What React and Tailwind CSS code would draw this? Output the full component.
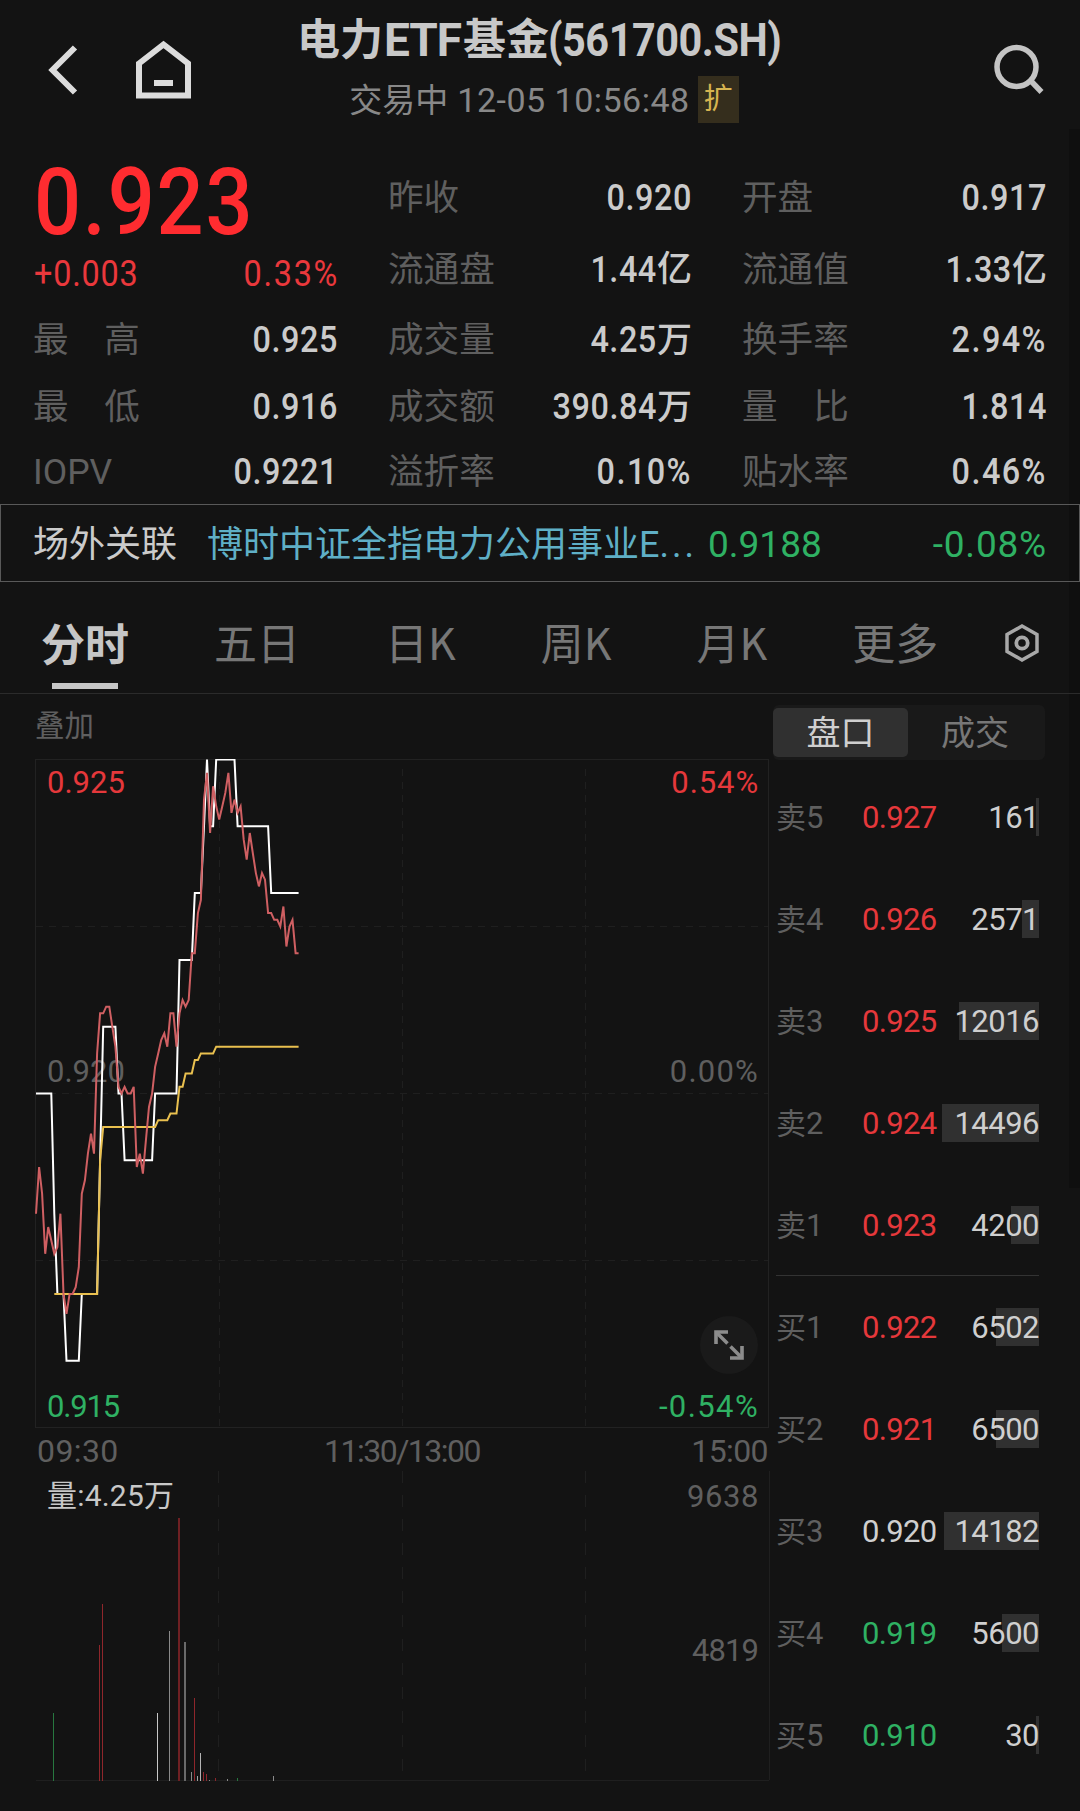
const stats = [
  [
    { label: '昨收', value: '0.920' },
    { label: '流通盘', value: '1.44', unit: '亿' },
    { label: '成交量', value: '4.25', unit: '万' },
    { label: '成交额', value: '390.84', unit: '万' },
    { label: '溢折率', value: '0.10%' }
  ],
  [
    { label: '开盘', value: '0.917' },
    { label: '流通值', value: '1.33', unit: '亿' },
    { label: '换手率', value: '2.94%' },
    { label: '量\u3000比', value: '1.814' },
    { label: '贴水率', value: '0.46%' }
  ]
];

const leftStats = [
  { label: '最\u3000高', value: '0.925' },
  { label: '最\u3000低', value: '0.916' },
  { label: 'IOPV', value: '0.9221' }
];

const tabs = ['五日', '日K', '周K', '月K', '更多'];

const asks = [
  { label: '卖5', price: '0.927', volume: 161 },
  { label: '卖4', price: '0.926', volume: 2571 },
  { label: '卖3', price: '0.925', volume: 12016 },
  { label: '卖2', price: '0.924', volume: 14496 },
  { label: '卖1', price: '0.923', volume: 4200 }
];

const bids = [
  { label: '买1', price: '0.922', volume: 6502 },
  { label: '买2', price: '0.921', volume: 6500 },
  { label: '买3', price: '0.920', volume: 14182 },
  { label: '买4', price: '0.919', volume: 5600 },
  { label: '买5', price: '0.910', volume: 30 }
];

const maxVolume = 14496;
const prevClose = 0.92;

// [minute, offset from previous close in 0.0001]
const priceLine = [
  [0, 0], [5, 0], [6, -18], [7, -30], [9, -30], [10, -40], [14, -40], [15, -30], [20, -30],
  [21, -10], [22, 10], [26, 10], [27, 0], [28, 0], [29, -10], [38, -10], [39, 0], [46, 0],
  [47, 20], [51, 20], [52, 30], [54, 30], [55, 40], [56, 50], [57, 40], [58, 40], [59, 50],
  [65, 50], [66, 40], [76, 40], [77, 30], [86, 30]
];

const avgLine = [
  [6, -30], [20, -30], [21, -10], [22, -5], [39, -5], [40, -4], [43, -4], [44, -3], [46, -3],
  [47, 1], [48, 1], [49, 3], [51, 3], [52, 5], [53, 5], [54, 6], [58, 6], [59, 7], [86, 7]
];

// one entry per minute
const iopv = [
  -18, -11, -15, -24, -20, -22, -24, -23, -18, -30, -33, -30, -30, -29, -26, -15, -13, -9, -6, -9,
  6, 12, 12, 13, 13, 10, 7, 1, 0, 1, 0, 0, 1, -11, -9, -12, -7, -2, 0, 4,
  6, 8, 9, 7, 12, 12, 7, 12, 14, 13, 14, 21, 21, 27, 29, 44, 48, 39, 46, 43,
  41, 43, 45, 48, 42, 44, 42, 43, 38, 35, 39, 36, 33, 31, 33, 32, 27, 27, 26, 26,
  25, 28, 22, 25, 26, 21, 21
].map((v, i) => [i, v]);

const volumeBars = [
  { x: 18, h: 68, color: '#27773f' },
  { x: 64, h: 136, color: '#8f262b' },
  { x: 67, h: 177, color: '#8f262b' },
  { x: 122, h: 68, color: '#c8c8c8' },
  { x: 134, h: 150, color: '#8a8a8a' },
  { x: 143, h: 263, color: '#6f2023', w: 2 },
  { x: 149, h: 139, color: '#6a6a6a', w: 2 },
  { x: 156, h: 9, color: '#8a8a8a' },
  { x: 159, h: 83, color: '#8f262b' },
  { x: 162, h: 5, color: '#a0a0a0' },
  { x: 165, h: 28, color: '#b4b4b4' },
  { x: 168, h: 9, color: '#8f262b' },
  { x: 171, h: 7, color: '#8f262b' },
  { x: 174, h: 1, color: '#8a8a8a' },
  { x: 180, h: 3, color: '#8f262b' },
  { x: 192, h: 2, color: '#8a8a8a' },
  { x: 202, h: 3, color: '#27773f' },
  { x: 238, h: 5, color: '#8a8a8a' }
];

const toPoints = (line) =>
  line.map(([m, v]) => `${(m * 3.054 + 1).toFixed(1)},${(334.5 - v * 6.68).toFixed(1)}`).join(' ');

const priceColor = (price) => {
  if (Number(price) > prevClose) return 'text-[#e5383b]';
  if (Number(price) < prevClose) return 'text-[#2fb163]';
  return 'text-[#cfcfcf]';
};

const StatRow = ({ label, value, unit }) => (
  <div className="flex items-center justify-between pt-px">
    <span className="-ml-px pt-[2px] text-[35.6px] text-[#5f5f5f]">{label}</span>
    <span className="-mr-px flex items-center font-medium text-[#cbcbcb]">
      <span className={`origin-right scale-x-90 ${value.endsWith('%') ? 'tracking-[1.6px]' : 'tracking-[0.6px]'}`}>
        {value}
      </span>
      {unit && <span className="text-[35px]">{unit}</span>}
    </span>
  </div>
);

const Header = () => (
  <header className="flex h-[161px] items-start">
    <div className="flex w-[230px] pl-[44px] pt-[38px]">
      <svg width="38" height="64" viewBox="0 0 38 64" fill="none" stroke="#dcdcdc" strokeWidth="6">
        <path d="M31 9.5 L8.5 32 L31 54.5" />
      </svg>
      <svg className="ml-[50px]" width="64" height="64" viewBox="0 0 64 64" fill="none" stroke="#dcdcdc" strokeWidth="6">
        <path d="M7 25.5 L31.5 6.5 L56 25.5 V57.5 H7 Z" />
        <path d="M22 45 H41" />
      </svg>
    </div>
    <div className="flex flex-1 flex-col items-center pt-[16px]">
      <h1 className="flex h-[48px] items-center whitespace-nowrap text-[43px] font-bold leading-none text-[#c8c8c8]">
        <span>电力</span>
        <span className="ml-px text-[46px] tracking-[-1px]">ETF</span>
        <span className="ml-[2px]">基金</span>
        <span className="-ml-px w-[235px] origin-left scale-x-90 text-[46px] tracking-[-0.5px]">(561700.SH)</span>
      </h1>
      <div className="ml-[8px] mt-[12px] flex h-[47px] items-center whitespace-nowrap text-[34px] leading-none text-[#888888]">
        <span className="pt-[2px] text-[33px]">交易中</span>
        <span className="ml-[9px] pt-px tracking-[0.5px]">12-05 10:56:48</span>
        <span className="ml-[8px] flex h-[47px] w-[41px] justify-center bg-[#352e1d] pt-[9px] text-[29px] text-[#d6b450]">
          扩
        </span>
      </div>
    </div>
    <div className="flex w-[230px] justify-end pr-[34px] pt-[40px]">
      <svg width="56" height="60" viewBox="0 0 56 60" fill="none" stroke="#c4c4c4" strokeWidth="5.5">
        <circle cx="26.5" cy="27" r="19.5" />
        <path d="M40 40 L51.5 52" />
      </svg>
    </div>
  </header>
);

const Quote = () => (
  <section className="grid h-[343px] grid-cols-[303px_302px_303px] gap-x-[52px] pl-[34px] text-[36px] leading-none">
    <div>
      <div className="flex h-[81px] items-center pt-[3px] text-[92px] font-medium text-[#ff2c30]">
        <span className="origin-left scale-x-90 tracking-[2px]">0.923</span>
      </div>
      <div className="flex h-[63px] items-center justify-between text-[#ea383c]">
        <span className="origin-left scale-x-90 tracking-[0.9px]">+0.003</span>
        <span className="-mr-[2px] origin-right scale-x-90 tracking-[1.9px]">0.33%</span>
      </div>
      <div className="grid grid-rows-[69px_65px_65px]">
        {leftStats.map((s) => (
          <StatRow key={s.label} {...s} />
        ))}
      </div>
    </div>
    {stats.map((column, i) => (
      <div key={i} className="grid grid-rows-[72px_72px_69px_65px_65px]">
        {column.map((s) => (
          <StatRow key={s.label} {...s} />
        ))}
      </div>
    ))}
  </section>
);

const LinkedFund = () => (
  <section className="flex h-[78px] items-center whitespace-nowrap border border-[#595959] px-[32px] text-[36px] leading-none">
    <span className="pt-[3px] text-[#cbcbcb]">场外关联</span>
    <span className="ml-[30px] w-[487px] pt-[3px] text-[#5fafc6]">
      博时中证全指电力公用事业E<span className="tracking-[3px]">...</span>
    </span>
    <span className="ml-[14px] pt-[2px] text-[37px] text-[#2fb163]">0.9188</span>
    <span className="ml-auto pt-[2px] text-[37px] tracking-[0.8px] text-[#2fb163]">-0.08%</span>
  </section>
);

const Tabs = () => (
  <nav className="flex h-[112px] items-stretch gap-[85px] whitespace-nowrap border-b border-[#2b2b2b] pl-[41px] font-['Noto_Sans_CJK_SC',sans-serif] text-[43px] leading-none text-[#777777]">
    <button className="flex flex-col items-center pt-[38px] text-[44px] font-bold text-[#c6c6c6]">
      <span>分时</span>
      <span className="mt-[19px] h-[6px] w-[66px] bg-[#c6c6c6]" />
    </button>
    {tabs.map((tab) => (
      <button key={tab} className="flex pt-[38px]">{tab}</button>
    ))}
    <svg className="-ml-[20px] mt-[41px] shrink-0" width="38" height="40" viewBox="0 0 38 40" fill="none" stroke="#a8a8a8" strokeWidth="3.5">
      <path d="M19 3 L34 11.5 V28.5 L19 37 L4 28.5 V11.5 Z" />
      <circle cx="19" cy="20" r="5.7" strokeWidth="3.8" />
    </svg>
  </nav>
);

const PriceChart = () => (
  <div className="relative h-[669px] w-[735px] text-[31px] leading-none">
    <div className="absolute inset-0 flex flex-col justify-between pl-[12px] pr-[11px] pb-[6px] pt-[8px]">
      <div className="flex justify-between text-[#e5383b]">
        <span>0.925</span>
        <span className="tracking-[0.9px]">0.54%</span>
      </div>
      <div className="-mt-[46px] flex justify-between text-[#5f5f5f]">
        <span>0.920</span>
        <span className="tracking-[1.2px]">0.00%</span>
      </div>
      <div className="flex justify-between text-[#2fb163]">
        <span className="tracking-[-1.2px]">0.915</span>
        <span className="tracking-[1.4px]">-0.54%</span>
      </div>
    </div>
    <svg className="relative block" width="735" height="669" viewBox="0 0 735 669" fill="none">
      <rect x="0.5" y="0.5" width="733" height="668" stroke="#222222" />
      <g stroke="#1f1f1f" strokeDasharray="7 6">
        <path d="M1 167.5 H733" />
        <path d="M1 334.5 H733" />
        <path d="M1 501.5 H733" />
        <path d="M184.5 10 V668" />
        <path d="M367.5 10 V668" />
        <path d="M550.5 10 V668" />
      </g>
      <polyline points={toPoints(priceLine)} stroke="#ffffff" strokeWidth="2" />
      <polyline points={toPoints(avgLine)} stroke="#e9c04f" strokeWidth="2" />
      <polyline points={toPoints(iopv)} stroke="#cf5f62" strokeWidth="2" />
    </svg>
    <button className="absolute bottom-[54px] right-[12px] flex h-[58px] w-[58px] items-center justify-center rounded-full bg-[#1a1a1a]">
      <svg width="32" height="32" viewBox="0 0 32 32" fill="none" stroke="#8c8c8c" strokeWidth="3.6">
        <path d="M3 15 V3 H15" />
        <path d="M3 3 L14.5 14.5" />
        <path d="M29 17 V29 H17" />
        <path d="M29 29 L17.5 17.5" />
      </svg>
    </button>
  </div>
);

const VolumeChart = () => (
  <div className="relative h-[310px] w-[735px] text-[31px] leading-none">
    <div className="absolute inset-0 flex justify-between pl-[12px] pr-[11px] pt-[10px]">
      <span className="text-[30px] tracking-[0.2px] text-[#c8c8c8]">量:4.25万</span>
      <div className="flex flex-col items-end gap-[123px] text-[#5f5f5f]">
        <span className="tracking-[0.6px]">9638</span>
        <span className="mr-px tracking-[-0.9px]">4819</span>
      </div>
    </div>
    <svg className="relative block" width="735" height="310" viewBox="0 0 735 310" fill="none">
      <g stroke="#1f1f1f">
        <path d="M1 309.5 H734" />
        <path d="M734.5 0 V309" />
        <path d="M183.5 0 V309" strokeDasharray="12 12" />
        <path d="M367.5 0 V309" strokeDasharray="12 12" />
        <path d="M550.5 0 V309" strokeDasharray="12 12" />
      </g>
      {volumeBars.map((bar) => (
        <rect key={bar.x} x={bar.x} y={310 - bar.h} width={bar.w || 1} height={bar.h} fill={bar.color} />
      ))}
    </svg>
  </div>
);

const OrderRow = ({ label, price, volume }) => (
  <div className="flex h-[102px] items-center">
    <span className="w-[86px] text-[#5f5f5f]">
      <span className="text-[30px]">{label[0]}</span>
      {label[1]}
    </span>
    <span className={`tracking-[-0.7px] ${priceColor(price)}`}>{price}</span>
    <div className="relative ml-auto flex h-[38px] items-center">
      <div
        className="absolute right-0 h-[38px] bg-[#303030]"
        style={{ width: Math.max(3, (volume / maxVolume) * 97) }}
      />
      <span className="relative tracking-[-0.5px] text-[#cfcfcf]">{volume}</span>
    </div>
  </div>
);

const OrderBook = () => (
  <aside className="w-[263px] text-[31px] leading-none">
    {asks.map((row) => (
      <OrderRow key={row.label} {...row} />
    ))}
    <div className="-mt-px h-px bg-[#333333]" />
    {bids.map((row) => (
      <OrderRow key={row.label} {...row} />
    ))}
  </aside>
);

const BookSwitch = () => (
  <div className="flex h-[55px] w-[272px] items-center rounded-[6px] bg-[#191919] text-[34px] leading-none">
    <button className="flex h-[49px] w-[135px] items-center justify-center rounded-[5px] bg-[#303030] text-[#cfcfcf]">
      盘口
    </button>
    <button className="flex h-[49px] flex-1 items-center justify-center pr-[3px] text-[#777777]">成交</button>
  </div>
);

export default function App() {
  return (
    <div className="relative h-[1811px] w-[1080px] overflow-hidden bg-[#131313] font-['Roboto','Noto_Sans_CJK_SC',sans-serif]">
      {/* scroll track */}
      <div className="absolute right-0 top-[129px] h-[1059px] w-[11px] bg-[#0f0f0f]" />
      <div className="relative">
        <Header />
        <Quote />
        <LinkedFund />
        <Tabs />
        <main className="flex">
          <div className="pl-[35px]">
            <div className="flex h-[65px] items-center text-[29.5px] leading-none text-[#5f5f5f]">叠加</div>
            <PriceChart />
            <div className="flex h-[43px] w-[735px] items-center justify-between px-[2px] pt-[2px] text-[32px] leading-none text-[#5f5f5f]">
              <span className="tracking-[0.4px]">09:30</span>
              <span className="-ml-[6px] tracking-[-1.5px]">11:30/13:00</span>
              <span className="tracking-[-0.6px]">15:00</span>
            </div>
            <VolumeChart />
          </div>
          <div className="pl-[3px] pt-[11px]">
            <BookSwitch />
            <div className="pl-[3px] pt-[6px]">
              <OrderBook />
            </div>
          </div>
        </main>
      </div>
    </div>
  );
}
